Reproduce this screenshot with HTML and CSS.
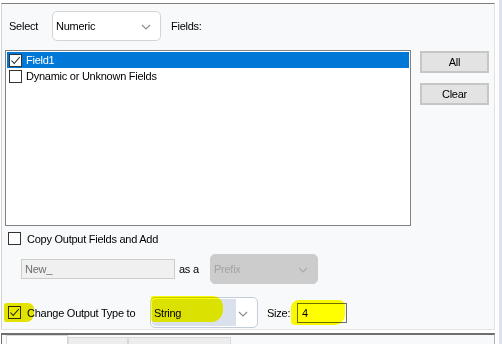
FILE: index.html
```html
<!DOCTYPE html>
<html>
<head>
<meta charset="utf-8">
<link rel="stylesheet" href="styles.css">
</head>
<body>
<div class="page">
  <div class="panel">
    <div class="select-row">
      <span class="lbl-select">Select</span>
      <div class="combo combo-numeric">
        <span class="combo-text">Numeric</span>
        <svg class="chev" width="10" height="6" viewBox="0 0 10 6"><path d="M1 1 L5 5 L9 1" fill="none" stroke="#8a8a8a" stroke-width="1.1"/></svg>
      </div>
      <span class="lbl-fields">Fields:</span>
    </div>
    <div class="list-row">
      <div class="listbox">
        <div class="item selected">
          <span class="cb checked"><svg width="11" height="11" viewBox="0 0 11 11"><path d="M1.5 5.5 L4.2 8.5 L9.8 2" fill="none" stroke="#222" stroke-width="1.1"/></svg></span>
          <span class="item-text">Field1</span>
        </div>
        <div class="item">
          <span class="cb"></span>
          <span class="item-text">Dynamic or Unknown Fields</span>
        </div>
      </div>
      <div class="buttons">
        <div class="btn">All</div>
        <div class="btn">Clear</div>
      </div>
    </div>
    <div class="check-row copy-row">
      <span class="cb"></span>
      <span class="check-text">Copy Output Fields and Add</span>
    </div>
    <div class="prefix-row">
      <div class="text-input disabled">New_</div>
      <span class="lbl-asa">as a</span>
      <div class="combo combo-disabled">
        <span class="combo-text">Prefix</span>
        <svg class="chev" width="10" height="6" viewBox="0 0 10 6"><path d="M1 1 L5 5 L9 1" fill="none" stroke="#a9a9a9" stroke-width="1.1"/></svg>
      </div>
    </div>
    <div class="type-row">
      <div class="check-row type-check">
        <span class="cb checked"><svg width="11" height="11" viewBox="0 0 11 11"><path d="M1.5 5.5 L4.2 8.5 L9.8 2" fill="none" stroke="#222" stroke-width="1.1"/></svg></span>
        <span class="check-text">Change Output Type to</span>
      </div>
      <div class="combo combo-string">
        <span class="combo-sel">String</span>
        <svg class="chev" width="10" height="6" viewBox="0 0 10 6"><path d="M1 1 L5 5 L9 1" fill="none" stroke="#8a8a8a" stroke-width="1.1"/></svg>
      </div>
      <span class="lbl-size">Size:</span>
      <div class="text-input size-input">4</div>
    </div>
    <div class="hl hl-check"></div>
    <div class="hl hl-string"></div>
    <div class="hl hl-size"></div>
  </div>
  <div class="tabstrip">
    <div class="tab active"></div>
    <div class="tab t2"></div>
    <div class="tab t3"></div>
  </div>
</div>
</body>
</html>
```

FILE: styles.css
```css
* { box-sizing: border-box; }
html, body { margin: 0; padding: 0; background: #ffffff; }
body {
  width: 502px;
  height: 344px;
  overflow: hidden;
  font-family: "Liberation Sans", Arial, sans-serif;
  font-size: 11px;
  letter-spacing: -0.25px;
  color: #000;
  position: relative;
}
.page {
  width: 502px;
  height: 344px;
  border-right: 3px solid #dde3ee;
  padding-right: 4px;
  padding-top: 3px;
}
.panel {
  position: relative;
  margin-left: 1px;
  width: 494px;
  height: 327px;
  background: #f8f9fb;
  border-top: 1px solid #7d7d7d;
  border-left: 1px solid #d5d5d5;
  border-right: 1px solid #e2e2e2;
  border-bottom: 1px solid #e2e2e2;
  padding: 7px 0 0 3px;
}
.select-row {
  display: flex;
  align-items: center;
  height: 30px;
}
.lbl-select { margin-left: 4px; width: 43px; }
.combo {
  position: relative;
  display: flex;
  align-items: center;
  width: 109px;
  height: 30px;
  background: #fff;
  border: 1px solid #d4d4d4;
  border-radius: 5px;
  padding-left: 3px;
}
.combo .chev { position: absolute; right: 9px; top: 12px; }
.lbl-fields { margin-left: 10px; }
.list-row {
  display: flex;
  margin-top: 9px;
}
.listbox {
  width: 406px;
  height: 176px;
  background: #fff;
  border: 1px solid #828282;
  padding: 1px 1px 0 1px;
}
.item {
  display: flex;
  align-items: center;
  height: 16px;
  padding-left: 2px;
}
.item.selected { background: #0078d7; color: #fff; }
.cb {
  width: 13px;
  height: 13px;
  border: 1px solid #333;
  background: #fff;
  display: flex;
  align-items: center;
  justify-content: center;
  flex: none;
}
.item-text { margin-left: 4px; }
.buttons {
  display: flex;
  flex-direction: column;
  gap: 10px;
  margin-left: 9px;
  margin-top: 1px;
}
.btn {
  width: 69px;
  height: 22px;
  background: #e3e3e3;
  border: 2px solid #c6c6c6;
  display: flex;
  align-items: center;
  justify-content: center;
}
.check-row {
  display: flex;
  align-items: center;
}
.copy-row { margin-top: 6px; margin-left: 3px; }
.check-text { margin-left: 6px; }
.prefix-row {
  display: flex;
  align-items: center;
  margin-top: 9px;
  margin-left: 16px;
}
.text-input {
  height: 20px;
  border: 1px solid #cccccc;
  display: flex;
  align-items: center;
  padding-left: 3px;
}
.text-input.disabled {
  width: 154px;
  background: #f0f0f0;
  color: #6d6d6d;
}
.lbl-asa { margin-left: 4px; width: 31px; }
.combo-disabled {
  width: 108px;
  background: #cccccc;
  border-color: #cccccc;
  color: #a3a3a3;
}
.type-row {
  display: flex;
  align-items: center;
  margin-top: 13px;
  margin-left: 3px;
  height: 31px;
}
.type-check { width: 142px; }
.combo-string {
  width: 108px;
  height: 31px;
  border-color: #c3ccd8;
  padding: 1px;
  align-items: stretch;
}
.combo-sel {
  width: 84px;
  background: #dbe1ec;
  display: flex;
  align-items: center;
  padding-left: 2px;
  border-radius: 4px 0 0 4px;
}
.combo-string .chev { top: 13px; }
.lbl-size { margin-left: 9px; width: 30px; }
.size-input {
  width: 50px;
  background: #fff;
  border-color: #6f6f6f;
  padding-left: 4px;
}
.hl {
  position: absolute;
  background: #ffff00;
  mix-blend-mode: multiply;
  pointer-events: none;
}
.hl-check {
  left: 2px; top: 299px;
  width: 30px; height: 19px;
  background: #e9e900;
  border-radius: 3px 6px 8px 2px;
}
.hl-string {
  left: 149px; top: 292px;
  width: 72px; height: 26px;
  border-radius: 2px 10px 12px 3px;
}
.hl-size {
  left: 289px; top: 296px;
  width: 54px; height: 25px;
  border-radius: 8px 6px 10px 4px;
}
.tabstrip {
  margin-left: 1px;
  margin-top: 3px;
  width: 494px;
  height: 11px;
  border-top: 2px solid #6e6e6e;
  border-left: 1px solid #6e6e6e;
  border-right: 1px solid #b0b0b0;
  display: flex;
  align-items: flex-end;
  padding-left: 4px;
  background: #f8f9fb;
}
.tab {
  height: 7px;
  border: 1px solid #d8d8d8;
  border-bottom: none;
  background: #ededed;
}
.tab.active { width: 62px; height: 9px; background: #fff; }
.tab.t2 { width: 60px; }
.tab.t3 { width: 103px; }
```
